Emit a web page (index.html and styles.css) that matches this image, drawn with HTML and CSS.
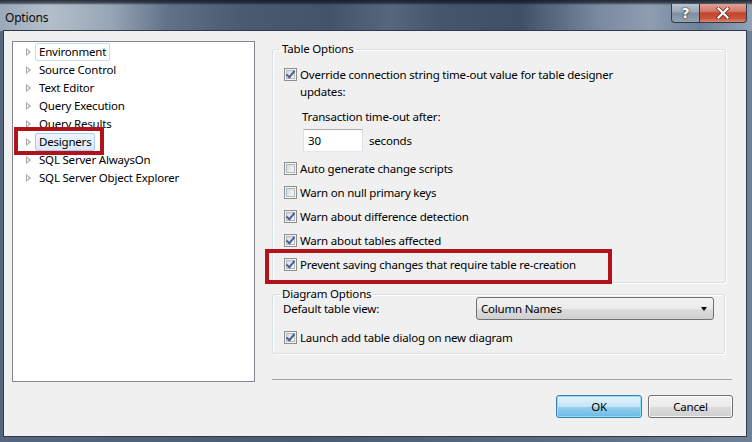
FILE: index.html
```html
<!DOCTYPE html>
<html>
<head>
<meta charset="utf-8">
<link rel="stylesheet" href="styles.css">
</head>
<body>
<div class="window">
  <div class="titlebar">
    <span class="title">Options</span>
    <div class="caption">
      <div class="cap-btn help">?</div>
      <div class="cap-btn close">
        <svg width="14" height="12" viewBox="0 0 14 12"><path d="M2.5 1.5 L11.5 10.5 M11.5 1.5 L2.5 10.5" stroke="#5a2a20" stroke-width="3.6" stroke-linecap="square"/><path d="M2.5 1.5 L11.5 10.5 M11.5 1.5 L2.5 10.5" stroke="#ffffff" stroke-width="2.2" stroke-linecap="square"/></svg>
      </div>
    </div>
  </div>
  <div class="frame">
    <div class="client">
      <div class="tree">
        <div class="node"><span class="arrow"></span><span class="label focus">Environment</span></div>
        <div class="node"><span class="arrow"></span><span class="label">Source Control</span></div>
        <div class="node"><span class="arrow"></span><span class="label">Text Editor</span></div>
        <div class="node"><span class="arrow"></span><span class="label">Query Execution</span></div>
        <div class="node"><span class="arrow"></span><span class="label">Query Results</span></div>
        <div class="node"><span class="arrow"></span><span class="label selected">Designers</span></div>
        <div class="node"><span class="arrow"></span><span class="label">SQL Server AlwaysOn</span></div>
        <div class="node"><span class="arrow"></span><span class="label">SQL Server Object Explorer</span></div>
      </div>
      <div class="pane">
        <fieldset class="group table-opts">
          <legend>Table Options</legend>
          <div class="gb-body">
            <div class="cb-row first">
              <span class="cb checked"></span>
              <span class="cb-text">Override connection string time-out value for table designer<br>updates:</span>
            </div>
            <div class="sub-label">Transaction time-out after:</div>
            <div class="timeout-row">
              <span class="textbox">30</span>
              <span>seconds</span>
            </div>
            <div class="cb-row line after-input"><span class="cb"></span><span class="cb-text">Auto generate change scripts</span></div>
            <div class="cb-row line"><span class="cb"></span><span class="cb-text">Warn on null primary keys</span></div>
            <div class="cb-row line"><span class="cb checked"></span><span class="cb-text">Warn about difference detection</span></div>
            <div class="cb-row line"><span class="cb checked"></span><span class="cb-text">Warn about tables affected</span></div>
            <div class="cb-row line"><span class="cb checked"></span><span class="cb-text">Prevent saving changes that require table re-creation</span></div>
          </div>
        </fieldset>
        <fieldset class="group diagram-opts">
          <legend>Diagram Options</legend>
          <div class="gb-body">
            <div class="view-row">
              <span class="view-label">Default table view:</span>
              <div class="combo"><span>Column Names</span><span class="combo-arrow"></span></div>
            </div>
            <div class="cb-row line launch"><span class="cb checked"></span><span class="cb-text">Launch add table dialog on new diagram</span></div>
          </div>
        </fieldset>
        <div class="separator"></div>
        <div class="buttons">
          <div class="btn default">OK</div>
          <div class="btn">Cancel</div>
        </div>
      </div>
    </div>
  </div>
  <div class="annot annot-tree"></div>
  <div class="annot annot-option"></div>
</div>
</body>
</html>
```
FILE: styles.css
```css
* { box-sizing: border-box; }
html, body { margin: 0; padding: 0; }
body {
  font-family: "Noto Sans", "Open Sans", sans-serif;
  font-size: 11.5px;
  letter-spacing: -0.2px;
  color: #000;
  background: #3a4a5f;
}
.window {
  position: relative;
  width: 752px;
  height: 442px;
  display: flex;
  flex-direction: column;
  background: linear-gradient(to right, #55677e 0, #4a5b71 40%, #5c6c80 75%, #6f8196 100%);
}
.titlebar {
  height: 31px;
  flex: none;
  display: flex;
  justify-content: space-between;
  align-items: flex-start;
  padding: 0 5px 0 5px;
  background:
    linear-gradient(to bottom, rgba(15,22,32,0.85) 0, rgba(15,22,32,0.6) 3px, rgba(15,22,32,0) 5px),
    linear-gradient(to right, #9aa9b9 0, #b3bfcb 50px, #97a6b6 110px, #5f7087 170px, #4a5b71 240px, #43546a 330px, #56677d 390px, #45566c 440px, #3f5066 520px, #7a8aa0 600px, #8e9db0 650px, #6e8097 700px, #93a3b6 752px);
}
.title {
  margin-top: 10px;
  line-height: 16px;
  font-size: 12px;
  color: #0b0b0b;
}
.caption {
  display: flex;
  margin-top: 4px;
}
.cap-btn {
  height: 19px;
  display: flex;
  align-items: center;
  justify-content: center;
  border: 1px solid #2e3a4a;
  border-top: none;
}
.help {
  width: 28px;
  border-radius: 0 0 0 4px;
  border-right: none;
  background: linear-gradient(to bottom, #b9c3cf 0, #9aa7b5 45%, #7f8d9d 50%, #93a2b2 100%);
  color: #fff;
  font-weight: bold;
  font-size: 14px;
  letter-spacing: 0;
  text-shadow: 0 0 2px #223, 0 0 1px #223;
  font-family: "DejaVu Sans", sans-serif;
}
.close {
  width: 48px;
  border-radius: 0 0 4px 0;
  background: linear-gradient(to bottom, #e2a193 0, #d27a67 40%, #c0452f 50%, #c9553b 80%, #db8a6d 100%);
}
.frame {
  flex: 1;
  padding: 0 6px 6px 4px;
}
.client {
  height: 100%;
  background: #f0f0f0;
  box-shadow: 0 0 0 1px #2d3a4b;
  display: flex;
  align-items: flex-start;
  padding: 10px 12px 0 8px;
  gap: 17px;
}
.tree {
  width: 243px;
  height: 341px;
  flex: none;
  background: #fff;
  border: 1px solid #828790;
  padding-top: 1px;
}
.node {
  height: 18px;
  display: flex;
  align-items: center;
  padding-left: 12px;
}
.arrow {
  width: 0;
  height: 0;
  margin-right: 4px;
  position: relative;
  border-left: 5px solid #a6a6a6;
  border-top: 4px solid transparent;
  border-bottom: 4px solid transparent;
  margin-left: 1px;
}
.arrow::after {
  content: "";
  position: absolute;
  left: -4px;
  top: -2px;
  border-left: 2.5px solid #fff;
  border-top: 2px solid transparent;
  border-bottom: 2px solid transparent;
}
.label {
  height: 18px;
  line-height: 15px;
  padding: 0 3px;
  border: 1px solid transparent;
  border-radius: 2px;
  white-space: nowrap;
}
.label.focus { border-color: #c6dcf2; }
.label.selected {
  border-color: #a9cbef;
  background: linear-gradient(to bottom, #eef5fd, #dbe9f9);
}
.pane {
  width: 461px;
  flex: none;
  display: flex;
  flex-direction: column;
}
.group {
  margin: 0;
  padding: 0;
  min-inline-size: auto;
  border: 1px solid #d5dfe5;
  border-radius: 3px;
  box-shadow: inset 1px 1px 0 #fff, 1px 1px 0 #fff;
}
.group legend {
  margin-left: 7px;
  padding: 0 2px;
  line-height: 18px;
}
.table-opts { width: 454px; margin-top: -1px; }
.diagram-opts { width: 453px; margin-top: 2px; }
.gb-body { padding: 0 0 6px 11px; }
.diagram-opts .gb-body { padding-bottom: 4px; }
.cb-row {
  display: flex;
  align-items: center;
  line-height: 17px;
}
.cb-row.first { align-items: flex-start; margin-top: 8px; }
.cb-row.first .cb { margin-top: 2px; }
.cb-row.line { height: 24px; }
.cb-row.after-input { margin-top: 4px; }
.cb-text { margin-left: 3px; white-space: nowrap; }
.cb {
  width: 13px;
  height: 13px;
  flex: none;
  border: 1px solid #8e8f8f;
  background: #f4f4f4;
  position: relative;
}
.cb::before {
  content: "";
  position: absolute;
  left: 1px; top: 1px; right: 1px; bottom: 1px;
  border: 1px solid #b4b8bd;
  background: linear-gradient(135deg, #d8dadd, #f7f7f7);
}
.cb.checked::after {
  content: "";
  position: absolute;
  left: 3px;
  top: 0px;
  width: 3px;
  height: 7px;
  border-right: 2px solid #4b5f98;
  border-bottom: 2px solid #4b5f98;
  transform: rotate(40deg);
  transform-origin: center;
}
.sub-label {
  margin-top: 8px;
  padding-left: 18px;
  line-height: 17px;
}
.timeout-row {
  margin-top: 4px;
  padding-left: 19px;
  display: flex;
  align-items: center;
  gap: 6px;
}
.textbox {
  width: 60px;
  height: 23px;
  background: #fff;
  border: 1px solid #dbdfe6;
  border-top-color: #abadb3;
  border-bottom-color: #e3e9ef;
  padding-left: 4px;
  line-height: 21px;
}
.view-row {
  display: flex;
  align-items: center;
  margin-top: -6px;
}
.view-label { width: 193px; margin-left: -1px; flex: none; line-height: 12px; }
.combo {
  width: 238px;
  height: 23px;
  border: 1px solid #707070;
  border-radius: 3px;
  background: linear-gradient(to bottom, #f2f2f2 0, #ebebeb 50%, #dddddd 51%, #cfcfcf 100%);
  display: flex;
  align-items: center;
  justify-content: space-between;
  padding: 0 6px 0 4px;
  line-height: 21px;
}
.combo-arrow {
  width: 0;
  height: 0;
  border-top: 4px solid #000;
  border-left: 3.5px solid transparent;
  border-right: 3.5px solid transparent;
}
.launch { margin-top: 5px; }
.separator {
  margin-top: 25px;
  width: 460px;
  height: 1px;
  background: #a0a0a0;
}
.buttons {
  margin-top: 15px;
  display: flex;
  justify-content: flex-end;
  gap: 6px;
}
.btn {
  width: 85px;
  height: 23px;
  border: 1px solid #707070;
  border-radius: 3px;
  background: linear-gradient(to bottom, #f2f2f2 0, #ebebeb 50%, #dddddd 51%, #cfcfcf 100%);
  box-shadow: inset 0 0 0 1px rgba(255,255,255,0.8);
  display: flex;
  align-items: center;
  justify-content: center;
}
.btn.default {
  width: 86px;
  border-color: #3c7fb1;
  background: linear-gradient(to bottom, #e5f4fc 0, #c4e5f6 50%, #98d1ef 51%, #6ab9e3 100%);
  box-shadow: inset 0 0 0 1px #8ee0fc;
}
.annot {
  position: absolute;
  border: 4px solid #b2131b;
}
.annot-tree { left: 14px; top: 127px; width: 90px; height: 28px; }
.annot-option { left: 265px; top: 249px; width: 347px; height: 35px; }
```
